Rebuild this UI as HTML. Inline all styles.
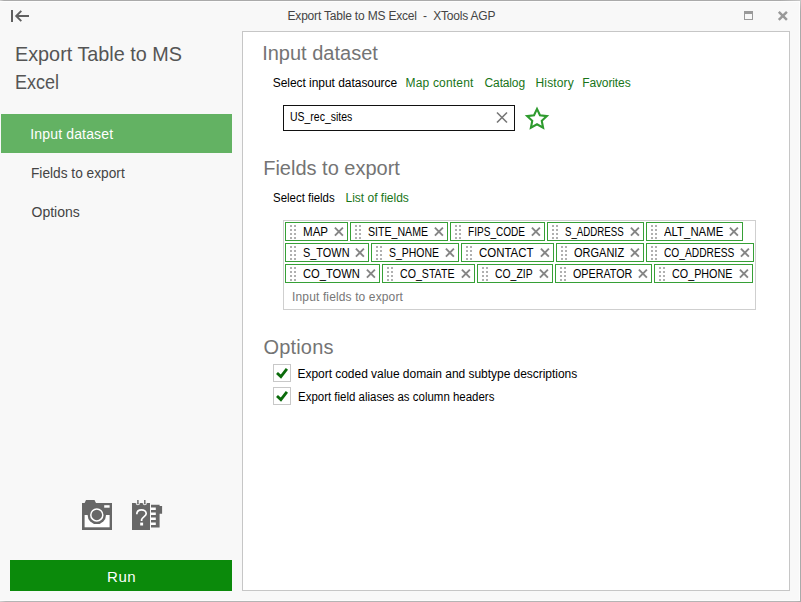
<!DOCTYPE html>
<html><head><meta charset="utf-8">
<style>
*{margin:0;padding:0;box-sizing:border-box}
html,body{width:801px;height:602px;overflow:hidden;background:#f8f8f8}
body{position:relative;font-family:"Liberation Sans",sans-serif}
.a{position:absolute}
.t{position:absolute;white-space:nowrap;line-height:1;transform-origin:0 0}
#win-top{left:0;top:0;width:801px;height:1px;background:linear-gradient(90deg,#d0d0d0,#aaa 4px,#aaa 780px,#c8c8c8)}
#win-top2{left:0;top:1px;width:800px;height:1px;background:#fdfdfd}
#win-r2{left:799px;top:1px;width:1px;height:600px;background:#fdfdfd}
#win-b2{left:0;top:600px;width:800px;height:1px;background:#fcfcfc}
#win-right{left:800px;top:0;width:1px;height:602px;background:linear-gradient(#c8c8c8,#aaa 12px,#aaa)}
#win-bot{left:0;top:601px;width:801px;height:1px;background:linear-gradient(90deg,#d0d0d0,#b4b4b4 6px,#b4b4b4 795px,#aaa)}
#panel{left:242px;top:31px;width:548px;height:560px;background:#fff;border:1px solid #c6c6c6}
.nav{color:#444;font-size:14px}
.head{color:#707070;font-size:20px}
.lbl{color:#111;font-size:12.5px}
.lnk{color:#1d7a1d;font-size:12.5px}
.tag{position:absolute;height:19px;border:1px solid #36a036;background:#fff}
.tag .g{position:absolute;left:4px;top:2px;width:2px;height:2px;background:#b0b0b0;
 box-shadow:4px 0 #b0b0b0,0 4px #b0b0b0,4px 4px #b0b0b0,0 8px #b0b0b0,4px 8px #b0b0b0,0 12px #b0b0b0,4px 12px #b0b0b0}
.tag .x{position:absolute;top:4px}
.cb{position:absolute;width:18px;height:18px;border:1px solid #c8c8c8;background:#fff}
</style></head><body>
<div id="win-top" class="a"></div>
<div id="win-right" class="a"></div>
<div id="win-bot" class="a"></div>
<div id="win-top2" class="a"></div><div id="win-r2" class="a"></div><div id="win-b2" class="a"></div>

<!-- back icon -->
<svg class="a" style="left:0;top:0" width="40" height="30">
 <rect x="11" y="10" width="2" height="12" fill="#606060"/>
 <path d="M29 16H16.3M21.3 10.9L16.2 16L21.3 21.1" stroke="#606060" stroke-width="1.9" fill="none"/>
</svg>


<!-- maximize / close -->
<svg class="a" style="left:740px;top:6px" width="56" height="20">
 <rect x="4.5" y="5.5" width="8" height="8" fill="none" stroke="#9a9a9a" stroke-width="1"/>
 <rect x="4" y="5" width="9" height="3" fill="#9a9a9a"/>
 <path d="M38.8 5.8L46.9 13.9M46.9 5.8L38.8 13.9" stroke="#999" stroke-width="2.5"/>
</svg>

<!-- left title -->

<!-- nav -->
<div class="a" style="left:1px;top:114px;width:231px;height:39px;background:#63b263"></div>

<!-- bottom icons -->
<svg class="a" style="left:0;top:490px" width="180" height="50" viewBox="0 490 180 50">
 <path d="M82 503H84.6L86 500H94.5L96 503H112V530H82Z" fill="#676767"/>
 <rect x="84.6" y="515" width="25" height="12.3" fill="#fff"/>
 <circle cx="96.8" cy="514.9" r="9.2" fill="#676767"/>
 <circle cx="96.8" cy="514.9" r="6" fill="none" stroke="#fff" stroke-width="1.5"/>
 <rect x="104.2" y="505.2" width="5.4" height="2.5" fill="#fff"/>
 <path d="M132 503H150V530H132Z" fill="#676767"/>
 <path d="M136.3 503.2a1.8 2.2 0 0 0 3.2 0M143.2 503.2a1.8 2.2 0 0 0 3.2 0" fill="none" stroke="#f7f7f7" stroke-width="1.6"/>
 <path d="M137.9 500V504.3M144.8 500V504.3" stroke="#676767" stroke-width="1.4"/>
 <path d="M151 504.8H159.6V506.1H162.1V513.7H159.6V527.6H151Z" fill="#676767"/>
 <path d="M151 507.4h4.8v2.5h-4.8zM151 512.4h4.8v2.5h-4.8zM151 517.5h4.8v2.4h-4.8zM151 522.4h4.8v2.6h-4.8z" fill="#fff"/>
 <path d="M136.8 514.2C136.8 511.2 139 509.8 141.5 509.8C144.2 509.8 146.2 511.5 146.2 513.7C146.2 516.2 142.2 517.3 141.6 519.6V521" fill="none" stroke="#fff" stroke-width="1.7"/>
 <rect x="140.2" y="522.6" width="2.9" height="2.9" fill="#fff"/>
</svg>

<div class="a" style="left:10px;top:560px;width:222px;height:31px;background:#0b8a0b"></div>

<!-- panel -->
<div id="panel" class="a"></div>

<div class="a" style="left:283px;top:105px;width:232px;height:26px;border:1px solid #111;background:#fff"></div>


<div class="a" style="left:283px;top:220px;width:473px;height:90px;border:1px solid #cfcfcf;background:#fff"></div>

<div class="cb" style="left:273px;top:364px"></div>
<div class="cb" style="left:273px;top:387px"></div>
<svg class="a" style="left:0;top:0" width="801" height="602">
 <path d="M497 112.5L507 122.5M507 112.5L497 122.5" stroke="#777" stroke-width="1.6"/>
 <polygon points="537.00,108.90 539.94,115.25 546.89,116.09 541.76,120.85 543.11,127.71 537.00,124.30 530.89,127.71 532.24,120.85 527.11,116.09 534.06,115.25" fill="none" stroke="#2e9b2e" stroke-width="2.1" stroke-linejoin="miter" stroke-miterlimit="3"/>
 <path d="M277 373L280.9 376.6L286.9 368.8" fill="none" stroke="#0b6b0b" stroke-width="2.8"/>
 <path d="M277 396L280.9 399.6L286.9 391.8" fill="none" stroke="#0b6b0b" stroke-width="2.8"/>
</svg>
<div class="tag" style="left:285px;top:222px;width:63px"><i class="g"></i><svg class="x" style="left:48px" width="10" height="10"><path d="M0.9 0.7L8.9 8.7M8.9 0.7L0.9 8.7" stroke="#858585" stroke-width="1.9"/></svg></div>
<div class="tag" style="left:350px;top:222px;width:98px"><i class="g"></i><svg class="x" style="left:83px" width="10" height="10"><path d="M0.9 0.7L8.9 8.7M8.9 0.7L0.9 8.7" stroke="#858585" stroke-width="1.9"/></svg></div>
<div class="tag" style="left:450px;top:222px;width:95px"><i class="g"></i><svg class="x" style="left:80px" width="10" height="10"><path d="M0.9 0.7L8.9 8.7M8.9 0.7L0.9 8.7" stroke="#858585" stroke-width="1.9"/></svg></div>
<div class="tag" style="left:547px;top:222px;width:97px"><i class="g"></i><svg class="x" style="left:82px" width="10" height="10"><path d="M0.9 0.7L8.9 8.7M8.9 0.7L0.9 8.7" stroke="#858585" stroke-width="1.9"/></svg></div>
<div class="tag" style="left:646px;top:222px;width:97px"><i class="g"></i><svg class="x" style="left:82px" width="10" height="10"><path d="M0.9 0.7L8.9 8.7M8.9 0.7L0.9 8.7" stroke="#858585" stroke-width="1.9"/></svg></div>
<div class="tag" style="left:285px;top:243px;width:84px"><i class="g"></i><svg class="x" style="left:69px" width="10" height="10"><path d="M0.9 0.7L8.9 8.7M8.9 0.7L0.9 8.7" stroke="#858585" stroke-width="1.9"/></svg></div>
<div class="tag" style="left:371px;top:243px;width:88px"><i class="g"></i><svg class="x" style="left:73px" width="10" height="10"><path d="M0.9 0.7L8.9 8.7M8.9 0.7L0.9 8.7" stroke="#858585" stroke-width="1.9"/></svg></div>
<div class="tag" style="left:461px;top:243px;width:93px"><i class="g"></i><svg class="x" style="left:78px" width="10" height="10"><path d="M0.9 0.7L8.9 8.7M8.9 0.7L0.9 8.7" stroke="#858585" stroke-width="1.9"/></svg></div>
<div class="tag" style="left:556px;top:243px;width:88px"><i class="g"></i><svg class="x" style="left:73px" width="10" height="10"><path d="M0.9 0.7L8.9 8.7M8.9 0.7L0.9 8.7" stroke="#858585" stroke-width="1.9"/></svg></div>
<div class="tag" style="left:646px;top:243px;width:108px"><i class="g"></i><svg class="x" style="left:93px" width="10" height="10"><path d="M0.9 0.7L8.9 8.7M8.9 0.7L0.9 8.7" stroke="#858585" stroke-width="1.9"/></svg></div>
<div class="tag" style="left:285px;top:264px;width:95px"><i class="g"></i><svg class="x" style="left:80px" width="10" height="10"><path d="M0.9 0.7L8.9 8.7M8.9 0.7L0.9 8.7" stroke="#858585" stroke-width="1.9"/></svg></div>
<div class="tag" style="left:382px;top:264px;width:93px"><i class="g"></i><svg class="x" style="left:78px" width="10" height="10"><path d="M0.9 0.7L8.9 8.7M8.9 0.7L0.9 8.7" stroke="#858585" stroke-width="1.9"/></svg></div>
<div class="tag" style="left:477px;top:264px;width:76px"><i class="g"></i><svg class="x" style="left:61px" width="10" height="10"><path d="M0.9 0.7L8.9 8.7M8.9 0.7L0.9 8.7" stroke="#858585" stroke-width="1.9"/></svg></div>
<div class="tag" style="left:555px;top:264px;width:97px"><i class="g"></i><svg class="x" style="left:82px" width="10" height="10"><path d="M0.9 0.7L8.9 8.7M8.9 0.7L0.9 8.7" stroke="#858585" stroke-width="1.9"/></svg></div>
<div class="tag" style="left:654px;top:264px;width:99px"><i class="g"></i><svg class="x" style="left:84px" width="10" height="10"><path d="M0.9 0.7L8.9 8.7M8.9 0.7L0.9 8.7" stroke="#858585" stroke-width="1.9"/></svg></div>
<div class="t" id="tb" style="left:287.50px;top:10.08px;font-size:12px;letter-spacing:-0.189px;color:#444">Export Table to MS Excel&nbsp; - &nbsp;XTools AGP</div>
<div class="t" id="lt1" style="left:15.40px;top:42.64px;font-size:21px;letter-spacing:0.000px;color:#555;transform:scaleX(0.9430)">Export Table to MS</div>
<div class="t" id="lt2" style="left:15.40px;top:70.64px;font-size:21px;letter-spacing:0.000px;color:#555;transform:scaleX(0.8571)">Excel</div>
<div class="t" id="nav1" style="left:30.30px;top:126.76px;font-size:14px;letter-spacing:0.150px;color:#fff">Input dataset</div>
<div class="t" id="nav2" style="left:30.50px;top:165.76px;font-size:14px;letter-spacing:0.000px;color:#444;transform:scaleX(0.9789)">Fields to export</div>
<div class="t" id="nav3" style="left:31.50px;top:204.76px;font-size:14px;letter-spacing:0.000px;color:#444">Options</div>
<div class="t" id="run" style="left:107.10px;top:568.60px;font-size:15px;letter-spacing:0.450px;color:#fff">Run</div>
<div class="t" id="h1" style="left:262.20px;top:42.80px;font-size:20px;letter-spacing:0.000px;color:#747474">Input dataset</div>
<div class="t" id="sel1" style="left:272.70px;top:77.08px;font-size:12px;letter-spacing:-0.041px;color:#000">Select input datasource</div>
<div class="t" id="lk1" style="left:405.50px;top:77.08px;font-size:12px;letter-spacing:0.180px;color:#187518">Map content</div>
<div class="t" id="lk2" style="left:484.60px;top:77.08px;font-size:12px;letter-spacing:-0.150px;color:#187518">Catalog</div>
<div class="t" id="lk3" style="left:535.50px;top:77.08px;font-size:12px;letter-spacing:0.150px;color:#187518">History</div>
<div class="t" id="lk4" style="left:582.20px;top:77.08px;font-size:12px;letter-spacing:-0.113px;color:#187518">Favorites</div>
<div class="t" id="inp" style="left:289.50px;top:111.00px;font-size:12.5px;letter-spacing:0.000px;color:#000;transform:scaleX(0.8378)">US_rec_sites</div>
<div class="t" id="h2" style="left:263.20px;top:157.80px;font-size:20px;letter-spacing:0.000px;color:#747474">Fields to export</div>
<div class="t" id="sel2" style="left:272.70px;top:192.08px;font-size:12px;letter-spacing:0.000px;color:#000;transform:scaleX(0.9538)">Select fields</div>
<div class="t" id="lk5" style="left:345.50px;top:192.08px;font-size:12px;letter-spacing:0.000px;color:#187518">List of fields</div>
<div class="t" id="ph" style="left:292.10px;top:291.08px;font-size:12px;letter-spacing:0.129px;color:#777">Input fields to export</div>
<div class="t" id="h3" style="left:263.60px;top:336.80px;font-size:20px;letter-spacing:0.150px;color:#747474">Options</div>
<div class="t" id="op1" style="left:297.50px;top:368.08px;font-size:12px;letter-spacing:-0.037px;color:#000">Export coded value domain and subtype descriptions</div>
<div class="t" id="op2" style="left:297.50px;top:391.08px;font-size:12px;letter-spacing:0.000px;color:#000;transform:scaleX(0.9561)">Export field aliases as column headers</div>
<div class="t" id="tg_MAP" style="left:303.00px;top:226.08px;font-size:12.5px;letter-spacing:0.000px;color:#000;transform:scaleX(0.9259)">MAP</div>
<div class="t" id="tg_SITE_NAME" style="left:368.00px;top:226.08px;font-size:12.5px;letter-spacing:0.000px;color:#000;transform:scaleX(0.8475)">SITE_NAME</div>
<div class="t" id="tg_FIPS_CODE" style="left:468.00px;top:226.08px;font-size:12.5px;letter-spacing:0.000px;color:#000;transform:scaleX(0.8058)">FIPS_CODE</div>
<div class="t" id="tg_S_ADDRESS" style="left:565.00px;top:226.08px;font-size:12.5px;letter-spacing:0.000px;color:#000;transform:scaleX(0.7763)">S_ADDRESS</div>
<div class="t" id="tg_ALT_NAME" style="left:664.00px;top:226.08px;font-size:12.5px;letter-spacing:0.000px;color:#000;transform:scaleX(0.9115)">ALT_NAME</div>
<div class="t" id="tg_S_TOWN" style="left:303.00px;top:247.08px;font-size:12.5px;letter-spacing:0.000px;color:#000;transform:scaleX(0.8744)">S_TOWN</div>
<div class="t" id="tg_S_PHONE" style="left:389.00px;top:247.08px;font-size:12.5px;letter-spacing:0.000px;color:#000;transform:scaleX(0.8364)">S_PHONE</div>
<div class="t" id="tg_CONTACT" style="left:479.00px;top:247.08px;font-size:12.5px;letter-spacing:0.000px;color:#000;transform:scaleX(0.9167)">CONTACT</div>
<div class="t" id="tg_ORGANIZ" style="left:574.00px;top:247.08px;font-size:12.5px;letter-spacing:0.000px;color:#000;transform:scaleX(0.8797)">ORGANIZ</div>
<div class="t" id="tg_CO_ADDRESS" style="left:664.00px;top:247.08px;font-size:12.5px;letter-spacing:0.000px;color:#000;transform:scaleX(0.8163)">CO_ADDRESS</div>
<div class="t" id="tg_CO_TOWN" style="left:303.00px;top:268.08px;font-size:12.5px;letter-spacing:0.000px;color:#000;transform:scaleX(0.8940)">CO_TOWN</div>
<div class="t" id="tg_CO_STATE" style="left:400.00px;top:268.08px;font-size:12.5px;letter-spacing:0.000px;color:#000;transform:scaleX(0.8493)">CO_STATE</div>
<div class="t" id="tg_CO_ZIP" style="left:495.00px;top:268.08px;font-size:12.5px;letter-spacing:0.000px;color:#000;transform:scaleX(0.8321)">CO_ZIP</div>
<div class="t" id="tg_OPERATOR" style="left:573.00px;top:268.08px;font-size:12.5px;letter-spacing:0.000px;color:#000;transform:scaleX(0.8601)">OPERATOR</div>
<div class="t" id="tg_CO_PHONE" style="left:672.00px;top:268.08px;font-size:12.5px;letter-spacing:0.000px;color:#000;transform:scaleX(0.8618)">CO_PHONE</div>
</body></html>
